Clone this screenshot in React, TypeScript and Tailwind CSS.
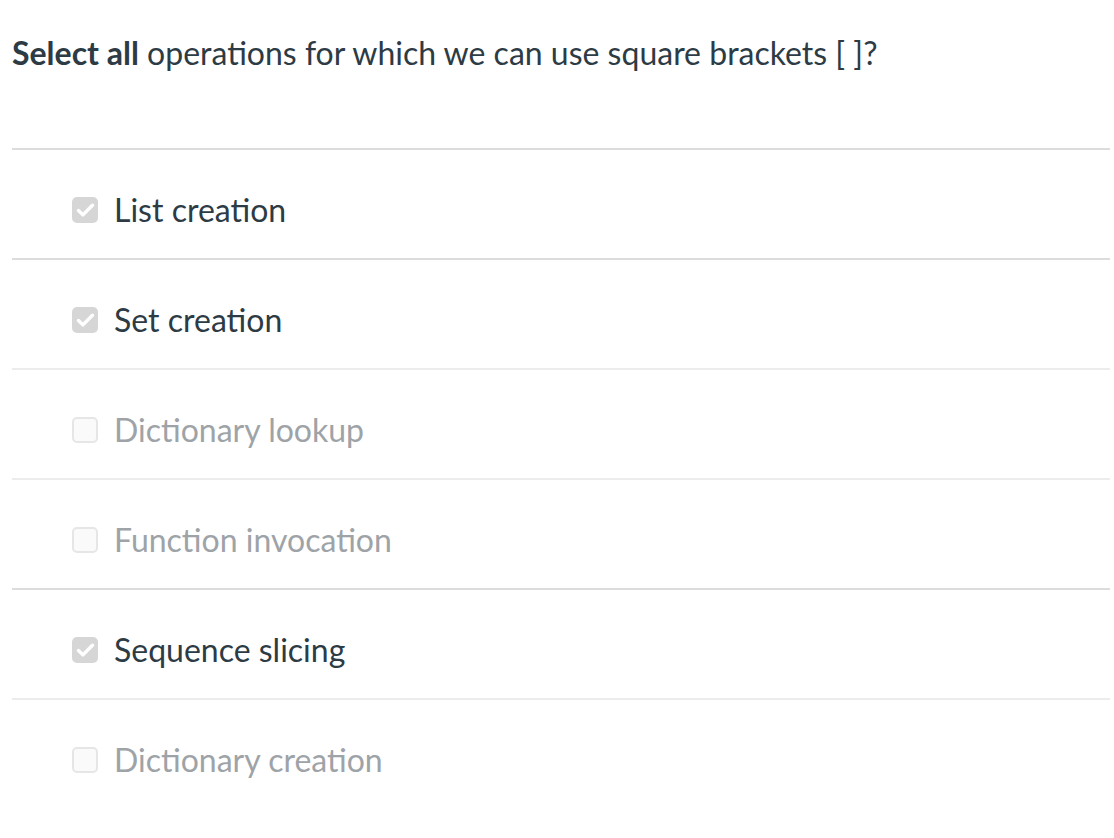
import { Check } from 'lucide-react'

const OPTIONS = [
  { label: 'List creation', checked: true, line: 'border-[#dcdcdc]' },
  { label: 'Set creation', checked: true, line: 'border-[#ececec]' },
  { label: 'Dictionary lookup', checked: false, line: 'border-[#ececec]' },
  { label: 'Function invocation', checked: false, line: 'border-[#dcdcdc]' },
  { label: 'Sequence slicing', checked: true, line: 'border-[#ececec]' },
  { label: 'Dictionary creation', checked: false, line: 'border-transparent' },
]

function Box({ checked }: { checked: boolean }) {
  if (checked) {
    return (
      <span className="flex h-[26px] w-[26px] shrink-0 items-center justify-center rounded-[5px] bg-[#d6d6d6]">
        <Check size={21} strokeWidth={4} className="text-white" />
      </span>
    )
  }
  return <span className="h-[26px] w-[26px] shrink-0 rounded-[5px] border-2 border-[#e6e6e6] bg-[#fafafa]" />
}

export default function App() {
  return (
    <div className="min-h-[838px] bg-white px-3 pt-[33px] text-[#2d3b45]" style={{ fontFamily: 'Lato, "Open Sans", sans-serif' }}>
      <p className="text-[32px] leading-[40px]">
        <b className="font-bold">Select all</b> operations for which we can use square brackets [ ]?
      </p>
      <div className="mr-[-8px] mt-[75px] border-t-2 border-[#dcdcdc]">
        {OPTIONS.map((o) => (
          <div key={o.label} className={`flex h-[110px] items-center gap-4 border-b-2 pl-[60px] pt-3 ${o.line}`}>
            <Box checked={o.checked} />
            <span className={`text-[32px] leading-[40px] ${o.checked ? 'text-[#2d3b45]' : 'text-[#9ea3a7]'}`}>{o.label}</span>
          </div>
        ))}
      </div>
    </div>
  )
}
